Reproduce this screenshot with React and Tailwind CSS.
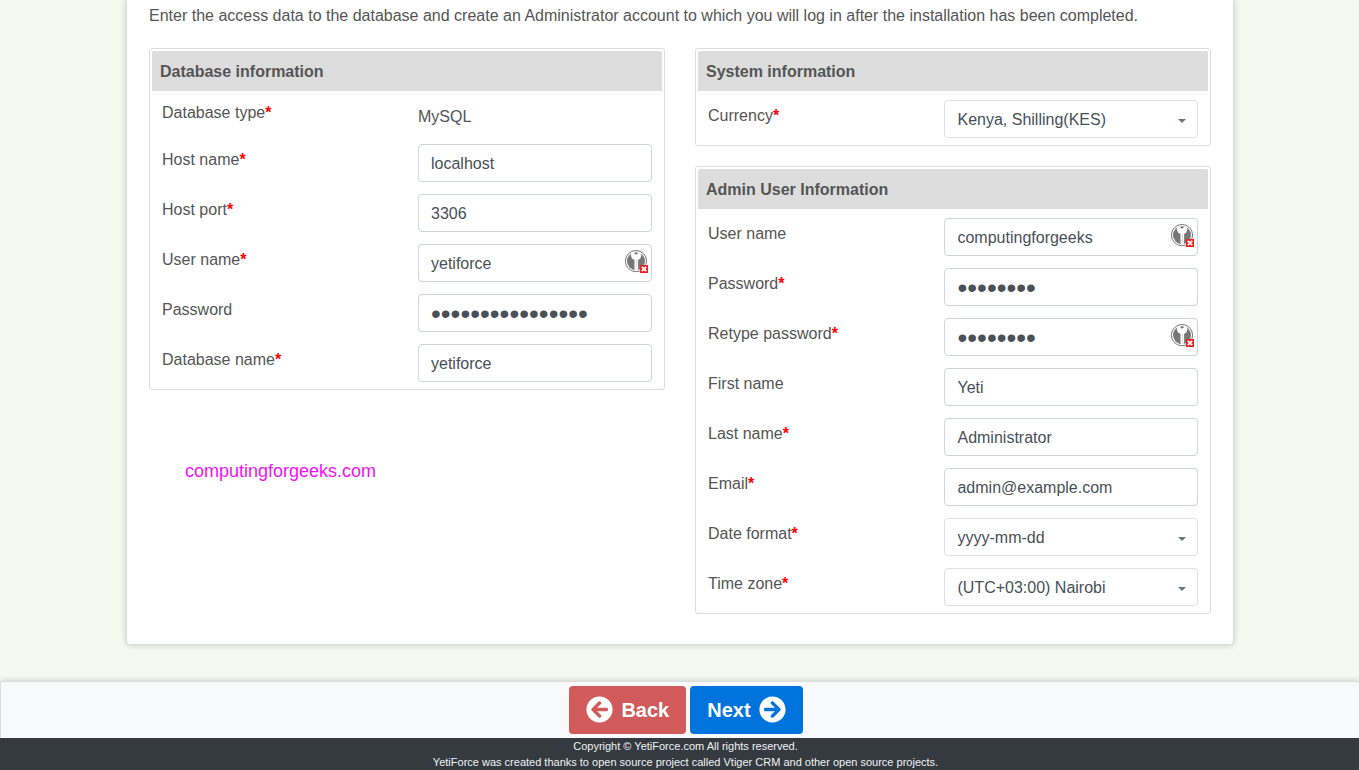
import { useState } from "react";
import { FaArrowCircleLeft, FaArrowCircleRight } from "react-icons/fa";

const control =
  "block h-[38px] w-full rounded border bg-white px-3 pt-[7px] pb-[5px] leading-6 text-[#495057] outline-none focus:border-[#80bdff]";

const databaseFields = [
  { id: "db-host", label: "Host name", required: true, value: "localhost" },
  { id: "db-port", label: "Host port", required: true, value: "3306" },
  { id: "db-user", label: "User name", required: true, value: "yetiforce", keyIcon: true },
  { id: "db-password", label: "Password", type: "password", value: "yetiforcepass123" },
  { id: "db-name", label: "Database name", required: true, value: "yetiforce" },
];

const systemFields = [
  { id: "currency", label: "Currency", required: true, options: ["Kenya, Shilling(KES)"] },
];

const adminFields = [
  { id: "admin-user", label: "User name", value: "computingforgeeks", keyIcon: true },
  { id: "admin-password", label: "Password", required: true, type: "password", value: "yetipass" },
  { id: "admin-retype", label: "Retype password", required: true, type: "password", value: "yetipass", keyIcon: true },
  { id: "first-name", label: "First name", value: "Yeti" },
  { id: "last-name", label: "Last name", required: true, value: "Administrator" },
  { id: "email", label: "Email", required: true, value: "admin@example.com" },
  { id: "date-format", label: "Date format", required: true, options: ["yyyy-mm-dd"] },
  { id: "time-zone", label: "Time zone", required: true, options: ["(UTC+03:00) Nairobi"] },
];

function KeyBadge() {
  return (
    <svg
      className="pointer-events-none absolute right-1 top-[5px] size-6"
      viewBox="0 0 24 24"
      aria-hidden="true"
    >
      <g transform="translate(0 0.6)">
        <circle cx="12" cy="11.5" r="10.6" fill="#fff" stroke="#777" strokeWidth="1" />
        <circle cx="12" cy="11.5" r="9" fill="#777" />
        <path
          d="M8.2 2.4h7.6l1.6 3.2-1.1 3.2-2.2 1.7v9l-1.700 1.600-1.900-1.600v-9L8 8.800 6.700 5.600z"
          fill="#fff"
        />
        <path d="M10.300 3h3.600l-.7 1.700h-2.200z" fill="#666" />
        <path d="M12.600 10.500v8.500" stroke="#ccc" strokeWidth=".8" />
      </g>
      <rect x="16" y="16" width="8" height="8" fill="#f0201c" />
      <path d="M17.800 17.800l4.400 4.400M22.200 17.800l-4.400 4.400" stroke="#fff" strokeWidth="1.800" />
    </svg>
  );
}

function Required() {
  return <span className="font-bold text-[#f00]">*</span>;
}

function Field({ field, columns }) {
  const [value, setValue] = useState(field.options ? field.options[0] : field.value);
  const change = (event) => setValue(event.target.value);
  const size = field.type === "password" ? "text-[28px]" : "text-base";
  return (
    <div className={`grid ${columns}`}>
      <label htmlFor={field.id} className="pt-1">
        {field.label}
        {field.required && <Required />}
      </label>
      <div className="relative">
        {field.options ? (
          <>
            <select
              id={field.id}
              value={value}
              onChange={change}
              className={`${control} text-base appearance-none border-[#dee0e8]`}
            >
              {field.options.map((option) => (
                <option key={option}>{option}</option>
              ))}
            </select>
            <svg
              className="pointer-events-none absolute right-3 top-[19px] h-1 w-2"
              viewBox="0 0 8 4"
              aria-hidden="true"
            >
              <path d="M0 0h8L4 4z" fill="#6c757d" />
            </svg>
          </>
        ) : (
          <input
            id={field.id}
            type={field.type || "text"}
            value={value}
            onChange={change}
            className={`${control} ${size} border-[#ced4da]`}
          />
        )}
        {field.keyIcon && <KeyBadge />}
      </div>
    </div>
  );
}

function Panel({ title, children }) {
  return (
    <section className="rounded-[3px] border border-[#ddd] p-[2px]">
      <h2 className="rounded-t-[2px] bg-[#ddd] px-2 pt-[9px] pb-[7px] font-bold">{title}</h2>
      <div className="flex flex-col gap-3 px-2.5 pb-[5px] pt-[9px]">{children}</div>
    </section>
  );
}

export default function App() {
  const left = "grid-cols-[256fr_234fr]";
  const right = "grid-cols-[236fr_253fr]";
  return (
    <div className="flex min-h-screen flex-col bg-[#f4faef] font-['Liberation_Sans',Arial,sans-serif] text-base leading-6 text-[#555]">
      <main className="ml-[126px] mr-[125px] rounded-b border border-t-0 border-[#ddd] bg-white px-[22px] pb-[30px] pt-1 shadow-[0_0_6px_rgba(0,0,0,0.2)]">
        <p className="mb-5">
          Enter the access data to the database and create an Administrator account to which you will
          log in after the installation has been completed.
        </p>
        <div className="grid grid-cols-2 items-start gap-[30px]">
          <div>
            <Panel title="Database information">
              <div className={`grid ${left}`}>
                <span className="pt-px">
                  Database type
                  <Required />
                </span>
                <span className="pt-[5px] pb-[3px]">MySQL</span>
              </div>
              {databaseFields.map((field) => (
                <Field key={field.id} field={field} columns={left} />
              ))}
            </Panel>
            <p className="ml-9 mt-[67px] text-lg leading-7 text-[#f012f0]">computingforgeeks.com</p>
          </div>
          <div className="flex flex-col gap-5">
            <Panel title="System information">
              {systemFields.map((field) => (
                <Field key={field.id} field={field} columns={right} />
              ))}
            </Panel>
            <Panel title="Admin User Information">
              {adminFields.map((field) => (
                <Field key={field.id} field={field} columns={right} />
              ))}
            </Panel>
          </div>
        </div>
      </main>
      <footer className="mt-auto pt-9">
        <div className="flex justify-center gap-1 rounded-t-[3px] border-l border-t border-[#ddd] bg-[#f8f9fb] py-1 pl-3 shadow-[0_0_6px_rgba(0,0,0,0.2)]">
          <button
            type="button"
            className="flex h-12 items-center gap-2 rounded bg-[#d15b5b] px-[17px] text-xl font-bold text-white"
          >
            <FaArrowCircleLeft className="mb-px size-[27px]" />
            Back
          </button>
          <button
            type="button"
            className="flex h-12 items-center gap-2 rounded bg-[#0073dd] px-[17px] text-xl font-bold text-white"
          >
            Next
            <FaArrowCircleRight className="mb-px size-[27px]" />
          </button>
        </div>
        <div className="relative bg-[#343a40] pl-3 text-center text-[11px] leading-4 text-[#f0f2f4]">
          <p>Copyright © YetiForce.com All rights reserved.</p>
          <p>
            YetiForce was created thanks to open source project called Vtiger CRM and other open
            source projects.
          </p>
        </div>
      </footer>
    </div>
  );
}
